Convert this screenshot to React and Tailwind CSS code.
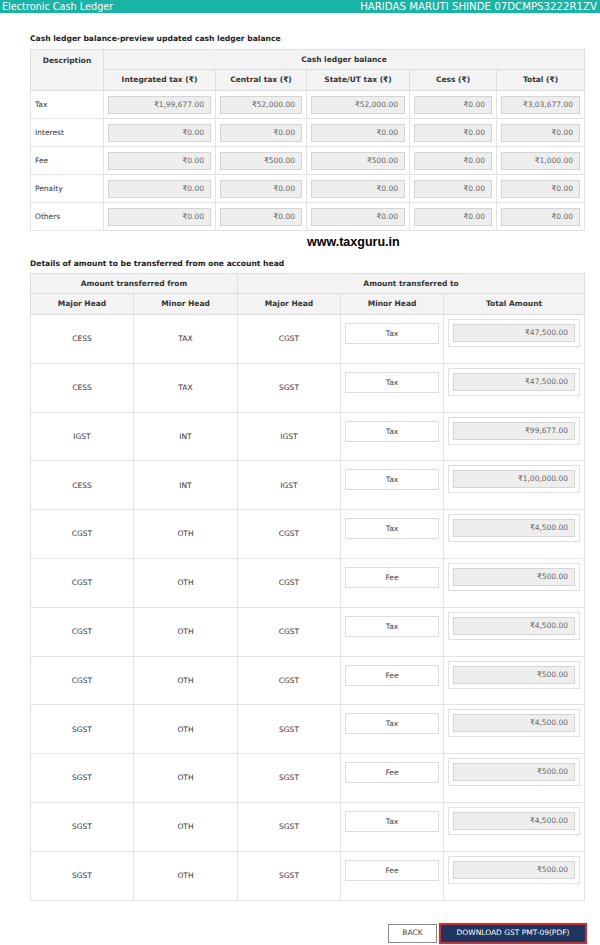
import React from "react";

const font = { fontFamily: '"DejaVu Sans", Verdana, sans-serif' };

const ledger = [
  ["Tax", "₹1,99,677.00", "₹52,000.00", "₹52,000.00", "₹0.00", "₹3,03,677.00"],
  ["Interest", "₹0.00", "₹0.00", "₹0.00", "₹0.00", "₹0.00"],
  ["Fee", "₹0.00", "₹500.00", "₹500.00", "₹0.00", "₹1,000.00"],
  ["Penalty", "₹0.00", "₹0.00", "₹0.00", "₹0.00", "₹0.00"],
  ["Others", "₹0.00", "₹0.00", "₹0.00", "₹0.00", "₹0.00"],
];

const transfers = [
  ["CESS", "TAX", "CGST", "Tax", "₹47,500.00"],
  ["CESS", "TAX", "SGST", "Tax", "₹47,500.00"],
  ["IGST", "INT", "IGST", "Tax", "₹99,677.00"],
  ["CESS", "INT", "IGST", "Tax", "₹1,00,000.00"],
  ["CGST", "OTH", "CGST", "Tax", "₹4,500.00"],
  ["CGST", "OTH", "CGST", "Fee", "₹500.00"],
  ["CGST", "OTH", "CGST", "Tax", "₹4,500.00"],
  ["CGST", "OTH", "CGST", "Fee", "₹500.00"],
  ["SGST", "OTH", "SGST", "Tax", "₹4,500.00"],
  ["SGST", "OTH", "SGST", "Fee", "₹500.00"],
  ["SGST", "OTH", "SGST", "Tax", "₹4,500.00"],
  ["SGST", "OTH", "SGST", "Fee", "₹500.00"],
];

function GrayBox({ value }) {
  return (
    <div className="h-[18px] bg-[#eeeeee] border border-[#d4d4d4] text-right pr-[6px] text-[7.5px] leading-[16px] text-[#666]">
      {value}
    </div>
  );
}

export default function App() {
  const th = "border border-[#dddddd] bg-[#f3f3f3] font-bold text-[7.5px] text-[#333] text-center p-0";
  return (
    <div className="w-[600px] h-[945px] bg-white relative overflow-hidden" style={font}>
      <div className="h-[13px] bg-[#19b4a5] flex justify-between items-center pl-[2px] pr-[3px] text-white leading-[13px]">
        <span className="text-[9.7px]">Electronic Cash Ledger</span>
        <span className="text-[10.2px]">HARIDAS MARUTI SHINDE 07DCMPS3222R1ZV</span>
      </div>

      <div className="ml-[30px] mt-[21px] h-[15px] font-bold text-[7.6px] leading-[10px] text-[#222]">
        Cash ledger balance-preview updated cash ledger balance
      </div>

      <table className="ml-[30px] w-[554px] border-collapse table-fixed">
        <colgroup>
          <col className="w-[73px]" />
          <col className="w-[112px]" />
          <col className="w-[91px]" />
          <col className="w-[103px]" />
          <col className="w-[87px]" />
          <col className="w-[88px]" />
        </colgroup>
        <thead>
          <tr className="h-[20px]">
            <th rowSpan={2} className={th + " align-top pt-[5px]"}>Description</th>
            <th colSpan={5} className={th}>Cash ledger balance</th>
          </tr>
          <tr className="h-[21px]">
            <th className={th}>Integrated tax (₹)</th>
            <th className={th}>Central tax (₹)</th>
            <th className={th}>State/UT tax (₹)</th>
            <th className={th}>Cess (₹)</th>
            <th className={th}>Total (₹)</th>
          </tr>
        </thead>
        <tbody>
          {ledger.map((r) => (
            <tr key={r[0]} className="h-[28px]">
              <td className="border border-[#e3e3e3] text-[7.5px] text-[#333] pl-[4px]">{r[0]}</td>
              {r.slice(1).map((v, i) => (
                <td key={i} className="border border-[#e3e3e3] px-[4px]">
                  <GrayBox value={v} />
                </td>
              ))}
            </tr>
          ))}
        </tbody>
      </table>

      <div className="ml-[307px] mt-[3px] h-[20px] font-bold text-[12.5px] leading-[16px] text-black" style={{ fontFamily: '"Liberation Sans", Arial, sans-serif' }}>
        www.taxguru.in
      </div>

      <div className="ml-[30px] mt-[5px] h-[14px] font-bold text-[7.6px] leading-[10px] text-[#222]">
        Details of amount to be transferred from one account head
      </div>

      <table className="ml-[30px] w-[554px] border-collapse table-fixed">
        <colgroup>
          <col className="w-[103px]" />
          <col className="w-[104px]" />
          <col className="w-[103px]" />
          <col className="w-[103px]" />
          <col className="w-[141px]" />
        </colgroup>
        <thead>
          <tr className="h-[20px]">
            <th colSpan={2} className={th}>Amount transferred from</th>
            <th colSpan={3} className={th}>Amount transferred to</th>
          </tr>
          <tr className="h-[21px]">
            <th className={th}>Major Head</th>
            <th className={th}>Minor Head</th>
            <th className={th}>Major Head</th>
            <th className={th}>Minor Head</th>
            <th className={th}>Total Amount</th>
          </tr>
        </thead>
        <tbody>
          {transfers.map((r, idx) => (
            <tr key={idx} className="h-[48.8px]">
              <td className="border border-[#e3e3e3] text-center text-[7.5px] text-[#333]">{r[0]}</td>
              <td className="border border-[#e3e3e3] text-center text-[7.5px] text-[#333]">{r[1]}</td>
              <td className="border border-[#e3e3e3] text-center text-[7.5px] text-[#333]">{r[2]}</td>
              <td className="border border-[#e3e3e3] align-top px-[4px] pt-[8px]">
                <div className="h-[21px] border border-[#dcdcdc] bg-white text-center text-[7.5px] leading-[19px] text-[#444]">
                  {r[3]}
                </div>
              </td>
              <td className="border border-[#e3e3e3] align-top px-[4px] pt-[4px]">
                <div className="border border-[#e0e0e0] p-[4px]">
                  <GrayBox value={r[4]} />
                </div>
              </td>
            </tr>
          ))}
        </tbody>
      </table>

      <div className="mt-[23px] mr-[13px] flex justify-end gap-[2px]">
        <button className="w-[49px] h-[19px] border border-[#8a8a8a] bg-white text-[7.5px] text-[#444]">
          BACK
        </button>
        <button className="w-[148px] h-[21px] -mt-[1px] border-2 border-[#c2323d] bg-[#1e3560] text-[7.5px] text-white shadow-[0_0_1px_#e38a8f]">
          DOWNLOAD GST PMT-09(PDF)
        </button>
      </div>
    </div>
  );
}
